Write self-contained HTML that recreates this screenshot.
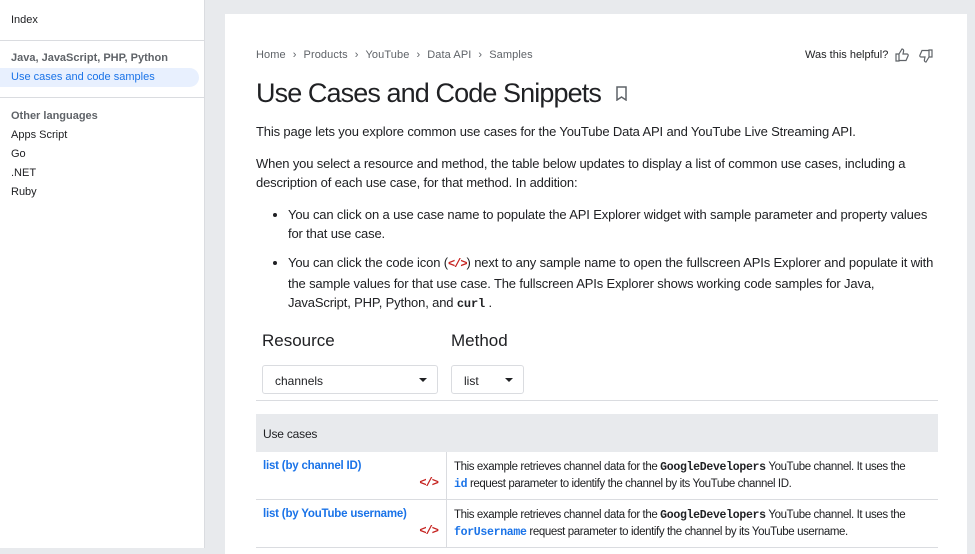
<!DOCTYPE html>
<html><head><meta charset="utf-8"><style>
*{box-sizing:border-box;margin:0;padding:0}
body{width:975px;height:548px;overflow:hidden;background:#e8eaed;font-family:"Liberation Sans",sans-serif;color:#202124;position:relative}
.side{position:absolute;left:0;top:0;width:205px;height:548px;background:#fff;border-right:1px solid #dadce0;font-size:11px}
.side div{position:absolute;left:11px}
.hr{position:absolute;left:0;width:205px;height:1px;background:#dadce0}
.card{position:absolute;left:225px;top:14px;width:742px;height:540px;background:#fff}
.a{position:absolute}
.bc{font-size:11px;color:#5f6368;top:49px;left:256px;letter-spacing:.1px}
.bc span{margin:0 7px;}
h1{position:absolute;left:256px;top:78px;font-size:27px;font-weight:400;color:#202124;letter-spacing:-.9px;white-space:nowrap}
p,li{font-size:13px;line-height:19px;letter-spacing:-.15px}
code,.m{font-family:"Liberation Mono",monospace}
.code{color:#c5221f;font-weight:bold;font-family:"Liberation Mono",monospace;font-size:12px;letter-spacing:-1px}
.sel{position:absolute;height:29px;border:1px solid #dadce0;border-radius:3px;font-size:12px;padding:8px 12px;top:365px}
.sel:after{content:"";position:absolute;right:10px;top:12px;border:4px solid transparent;border-top:4px solid #202124}
.tbl{position:absolute;left:256px;top:414px;width:682px;font-size:11.5px;letter-spacing:-.4px}
.lnk{color:#1a73e8;font-weight:bold;letter-spacing:-.2px}
.tbl .m{font-size:11.5px;letter-spacing:-.3px}
</style></head><body>
<div class="side">
<div style="top:14px">Index</div>
<div class="hr" style="top:40px;left:0"></div>
<div style="top:52px;font-weight:bold;color:#5f6368">Java, JavaScript, PHP, Python</div>
<div style="top:68px;left:0;width:199px;height:19px;background:#e8f0fe;border-radius:0 10px 10px 0"></div>
<div style="top:71px;color:#1a73e8">Use cases and code samples</div>
<div class="hr" style="top:97px;left:0"></div>
<div style="top:110px;font-weight:bold;color:#5f6368">Other languages</div>
<div style="top:129px">Apps Script</div>
<div style="top:148px">Go</div>
<div style="top:167px">.NET</div>
<div style="top:186px">Ruby</div>
</div>
<div class="card"></div>
<div class="a bc">Home<span>›</span>Products<span>›</span>YouTube<span>›</span>Data API<span>›</span>Samples</div>
<div class="a" style="left:805px;top:49px;font-size:11px">Was this helpful?</div>
<svg class="a" style="left:895px;top:48px" width="14" height="14" viewBox="0 0 14 14" fill="none" stroke="#5f6368" stroke-width="1.2"><path d="M1 6h3v7H1zM4 6l3-5c1 0 2 1 1.5 2.5L8 6h4c1 0 1.5 1 1 2l-2 4.5H4"/></svg>
<svg class="a" style="left:919px;top:49px" width="14" height="14" viewBox="0 0 14 14" fill="none" stroke="#5f6368" stroke-width="1.2"><path d="M13 8h-3V1h3zM10 8l-3 5c-1 0-2-1-1.5-2.5L6 8H2c-1 0-1.5-1-1-2l2-4.5h7"/></svg>
<h1>Use Cases and Code Snippets</h1>
<svg class="a" style="left:615px;top:86px" width="13" height="15" viewBox="0 0 13 15" fill="none" stroke="#5f6368" stroke-width="1.5"><path d="M2 1h9v13l-4.5-3L2 14z"/></svg>
<p class="a" style="left:256px;top:122px;width:690px">This page lets you explore common use cases for the YouTube Data API and YouTube Live Streaming API.</p>
<p class="a" style="left:256px;top:154px;width:670px">When you select a resource and method, the table below updates to display a list of common use cases, including a description of each use case, for that method. In addition:</p>
<ul class="a" style="left:288px;top:205px;width:650px">
<li style="margin-bottom:10px">You can click on a use case name to populate the API Explorer widget with sample parameter and property values<br>for that use case.</li>
<li>You can click the code icon (<span class="code">&lt;/&gt;</span>) next to any sample name to open the fullscreen APIs Explorer and populate it with the sample values for that use case. The fullscreen APIs Explorer shows working code samples for Java, JavaScript, PHP, Python, and <b class="m" style="font-size:12px">curl</b> .</li>
</ul>
<div class="a" style="left:262px;top:331px;font-size:17px">Resource</div>
<div class="a" style="left:451px;top:331px;font-size:17px">Method</div>
<div class="sel" style="left:262px;width:176px">channels</div>
<div class="sel" style="left:451px;width:73px">list</div>
<div class="a" style="left:256px;top:400px;width:682px;height:1px;background:#dadce0"></div>
<div class="tbl">
<div style="height:38px;background:#e8eaed;padding:13px 7px;font-size:12px;letter-spacing:-.2px">Use cases</div>
<div style="display:flex;height:48px;border-bottom:1px solid #dadce0">
<div style="width:191px;border-right:1px solid #dadce0;padding:8px 7px;position:relative"><span class="lnk">list (by channel ID)</span><span class="code" style="position:absolute;right:8px;top:24px">&lt;/&gt;</span></div>
<div style="flex:1;padding:7px 7px;line-height:16px;white-space:nowrap">This example retrieves channel data for the <b class="m">GoogleDevelopers</b> YouTube channel. It uses the<br><b class="m" style="color:#1a73e8">id</b> request parameter to identify the channel by its YouTube channel ID.</div></div>
<div style="display:flex;height:48px;border-bottom:1px solid #dadce0">
<div style="width:191px;border-right:1px solid #dadce0;padding:8px 7px;position:relative"><span class="lnk">list (by YouTube username)</span><span class="code" style="position:absolute;right:8px;top:24px">&lt;/&gt;</span></div>
<div style="flex:1;padding:7px 7px;line-height:16px;white-space:nowrap">This example retrieves channel data for the <b class="m">GoogleDevelopers</b> YouTube channel. It uses the<br><b class="m" style="color:#1a73e8">forUsername</b> request parameter to identify the channel by its YouTube username.</div></div>
</div>
</body></html>
